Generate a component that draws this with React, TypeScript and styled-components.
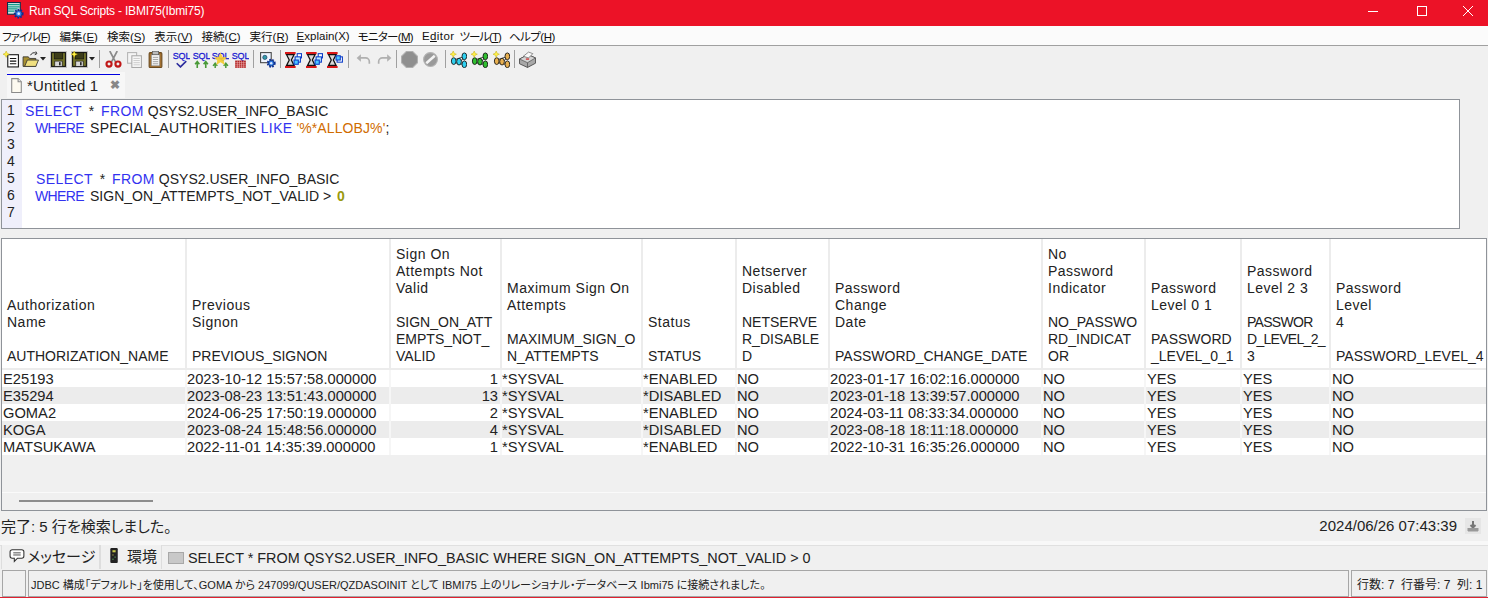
import React from 'react';
import styled, { createGlobalStyle } from 'styled-components';

const FONT = `"Liberation Sans", "Noto Sans CJK JP", sans-serif`;

const Global = createGlobalStyle`
  html, body { margin: 0; padding: 0; background: #f0f0f0; }
  body { font-family: ${FONT}; color: #111; overflow: hidden; font-feature-settings: "palt"; }
  #root { height: 598px; width: 1488px; }
`;

const Page = styled.div`
  width: 1488px; height: 598px; display: flex; flex-direction: column; background: #f0f0f0; overflow: hidden;
`;
const TitleBar = styled.div`
  height: 26px; box-sizing: border-box; background: #ec1227; color: #fff; display: flex; align-items: center; padding: 0 0 5px 7px; font-size: 12px; letter-spacing: -.2px; flex: none;
`;
const TitleText = styled.span` margin-left: 5px; flex: 1; padding-top: 1px; `;
const WinBtn = styled.div<{ $w: number }>`
  width: ${p => p.$w}px; display: flex; align-items: center; justify-content: center;
`;
const MenuBar = styled.div`
  height: 20px; box-sizing: border-box; background: #fbfbfb; display: flex; align-items: center; padding-left: 2px; gap: 9px; font-size: 11.5px; flex: none; border-bottom: 1px solid #a0a0a0;
`;
const MenuItem = styled.span<{ $ls: number; $mr: number }>`
  white-space: nowrap; letter-spacing: ${p => p.$ls}px; margin-right: ${p => p.$mr}px;
  u { text-underline-offset: 1px; }
`;
const ToolBar = styled.div`
  height: 26px; display: flex; align-items: center; padding-left: 2px; flex: none;
`;
const Sep = styled.div` width: 1px; height: 18px; background: #a0a0a0; margin: 0 3px; flex: none; `;
const TabStrip = styled.div`
  height: 27px; background: #f0f0f0; display: flex; align-items: flex-start; padding-left: 7px; flex: none;
`;
const DocTab = styled.div`
  position: relative; width: 118px; height: 26px; box-sizing: border-box; background: #f7f7f7; display: flex; align-items: center; gap: 2px; padding: 0 0 0 1px; font-size: 15px; letter-spacing: .2px; color: #222;
  &::before { content: ''; position: absolute; left: 0; top: 2px; width: 113px; height: 1px; background: #0000e0; }
`;
const DocClose = styled.span` margin-left: 10px; color: #888; font-size: 12px; font-weight: bold; line-height: 1; `;
const Gap = styled.div<{ $h: number }>` height: ${p => p.$h}px; flex: none; `;
const Editor = styled.div`
  margin: 0 28px 0 1px; height: 130px; box-sizing: border-box; flex: none; border: 1px solid #8f9399; background: #fff; display: flex; overflow: hidden;
`;
const Gutter = styled.div`
  width: 20px; background: #efeffb; padding: 2px 0 0 5px; box-sizing: border-box; font-size: 14px; line-height: 17px; color: #222; flex: none;
`;
const Code = styled.div`
  padding: 3px 0 0 3px; font-size: 14px; line-height: 17px; white-space: pre; color: #222;
`;
const CodeLine = styled.div<{ $indent?: number }>` height: 17px; padding-left: ${p => p.$indent ?? 0}px; `;
const Kw = styled.span` color: #3232f0; letter-spacing: .4px; `;
const Where = styled.span` color: #3232f0; letter-spacing: -.6px; margin-right: 2px; `;
const Star = styled.span` margin: 0 3px; `;
const Wide = styled.span` letter-spacing: .3px; `;
const Str = styled.span` color: #d06c00; letter-spacing: .1px; `;
const Num = styled.span` color: #9a9a10; font-weight: bold; margin-left: 2px; `;
const Results = styled.div`
  margin: 0 1px; height: 273px; box-sizing: border-box; flex: none; border: 1px solid #8f9399; background: #f0f0f0; display: flex; flex-direction: column; overflow: hidden;
`;
const COLS = '185px 204px 111px 141px 94px 93px 213px 103px 96px 89px 157px';
const Head = styled.div`
  display: grid; grid-template-columns: ${COLS}; height: 131px; box-sizing: border-box; background: #fff; flex: none; border-bottom: 2px solid #ececec;
`;
const HeadCell = styled.div`
  display: flex; flex-direction: column; justify-content: flex-end; padding: 0 0 3px 5px; font-size: 14px; line-height: 17px; border-right: 2px solid #ececec; white-space: pre; color: #222; box-sizing: border-box; overflow: hidden;
  &:last-child { border-right: 0; }
`;
const HeadTitle = styled.span` letter-spacing: .5px; `;
const HeadName = styled.span<{ $tight?: boolean }>` letter-spacing: ${p => (p.$tight ? '-.7px' : '0')}; `;
const Row = styled.div<{ $odd: boolean }>`
  display: grid; grid-template-columns: ${COLS}; height: 17px; background: ${p => (p.$odd ? '#ececec' : '#fff')}; flex: none;
`;
const Cell = styled.div<{ $right?: boolean; $flush?: boolean }>`
  font-size: 14.7px; line-height: 17px; height: 17px; padding: 1px 2px 0 ${p => (p.$flush ? 0 : 1)}px; white-space: nowrap; overflow: hidden; color: #222; box-sizing: border-box; border-right: 2px solid #f6f6f6;
  text-align: ${p => (p.$right ? 'right' : 'left')};
  &:last-child { border-right: 0; }
`;
const Spacer = styled.div` height: 38px; box-sizing: border-box; flex: none; border-bottom: 1px solid #fafafa; `;
const ScrollThumb = styled.div` width: 134px; height: 2px; background: #8c8c8c; margin: 7px 0 0 17px; flex: none; `;
const Status = styled.div`
  height: 30px; display: flex; align-items: center; font-size: 15px; flex: none; padding: 0 7px 0 1px; box-sizing: border-box; background: #f0f0f0;
`;
const StatusMsg = styled.span` flex: 1; color: #222; padding-bottom: 2px; `;
const StatusTime = styled.span` font-size: 15px; color: #222; margin-right: 8px; padding-bottom: 1px; `;
const DownloadBtn = styled.div` width: 16px; height: 16px; display: flex; align-items: center; justify-content: center; background: #e6e6e6; `;
const BottomTabs = styled.div`
  height: 29px; background: #f0f0f0; display: flex; flex: none; border-top: 4px solid #f8f8f8; box-sizing: border-box; box-shadow: inset 0 1px #e0e0e0; align-items: flex-start; padding-left: 1px;
`;
const MsgTab = styled.div<{ $w: number; $pad: number; $gap: number }>`
  width: ${p => p.$w}px; background: #f0f0f0; border-right: 1px solid #ddd; border-left: 1px solid #ddd; display: flex; align-items: center; font-size: 15px; gap: ${p => p.$gap}px; padding: 0 0 4px ${p => p.$pad}px; box-sizing: border-box; color: #222; height: 24px; white-space: nowrap;
`;
const QueryTab = styled.div`
  display: flex; align-items: center; gap: 4px; font-size: 14.4px; padding: 5px 0 0 6px; color: #222; white-space: nowrap;
`;
const QuerySwatch = styled.div` width: 16px; height: 12px; box-sizing: border-box; background: #c8c8c8; border: 1px solid #a8a8a8; `;
const Foot = styled.div`
  height: 28px; display: flex; gap: 2px; padding: 0 1px 0 2px; box-sizing: border-box; flex: none; border-bottom: 1px solid #e02030; background: #f0f0f0;
`;
const FootBox = styled.div<{ $w?: number; $grow?: boolean }>`
  ${p => (p.$w ? `width: ${p.$w}px;` : '')} ${p => (p.$grow ? 'flex: 1;' : 'flex: none;')}
  border: 1px solid #a6a6a6; box-sizing: border-box; display: flex; align-items: center; padding-left: 2px; font-size: 11px; color: #222; white-space: nowrap; overflow: hidden;
`;
const FootCount = styled.span` font-size: 12px; padding-left: 3px; `;
const IconBox = styled.svg` width: 17px; height: 17px; flex: none; display: block; `;
const Slot = styled.div<{ $w: number }>` width: ${p => p.$w}px; height: 24px; display: flex; align-items: center; justify-content: center; flex: none; `;
const CaretWrap = styled.div` width: 7px; display: flex; align-items: center; flex: none; `;

const Spark = ({ x = 3, y = 3 }: { x?: number; y?: number }) => (
  <path d={`M${x} ${y - 3}l.9 2.100 2.100.9-2.100.9-.9 2.100-.9-2.100-2.100-.9 2.100-.9z`} fill="#fff24a" stroke="#b8a000" strokeWidth=".4" />
);
const Ico = ({ children }: { children: React.ReactNode }) => <IconBox viewBox="0 0 16 16">{children}</IconBox>;
const Gear = ({ cx, cy, r }: { cx: number; cy: number; r: number }) => (
  <>
    <circle cx={cx} cy={cy} r={r} fill="none" stroke="#0d2c9a" strokeWidth="2" strokeDasharray="1.500 1.100" />
    <circle cx={cx} cy={cy} r={r - .5} fill="#2f78e8" stroke="#0d2c66" strokeWidth=".7" />
    <circle cx={cx} cy={cy} r={r * .35} fill="#d8ecff" />
  </>
);

const NewDoc = () => <Ico><rect x="4.500" y="3.500" width="10" height="11.500" fill="#fff" stroke="#111" /><path d="M6.500 7h6M6.500 9.500h6M6.500 12h6" stroke="#111" strokeWidth="1" /><Spark /></Ico>;
const Folder = () => <Ico><path d="M1 5.500h5l1 1.500h6v7.500H1z" fill="#a89030" stroke="#333" strokeWidth=".8" /><path d="M2.500 14.500l2.500-6h10.500l-2.500 6z" fill="#f0e080" stroke="#333" strokeWidth=".8" /><path d="M8 4c1-2 3-3 5-2M13 .5l1 2-2 1" fill="none" stroke="#222" strokeWidth=".9" /></Ico>;
const Floppy = ({ spark }: { spark?: boolean }) => (
  <Ico>
    <rect x="0" y="0" width="16" height="16" fill="#c4c4c4" />
    <rect x="1.500" y="1.500" width="13" height="13" fill="#76762a" stroke="#111" />
    <rect x="4" y="1.500" width="8" height="6" fill="#3c3c18" stroke="#111" strokeWidth=".6" />
    <rect x="4.500" y="9.500" width="7" height="5" fill="#d8d8d8" stroke="#111" strokeWidth=".6" />
    <rect x="8.500" y="10.500" width="1.500" height="3" fill="#222" />
    {spark && <Spark />}
  </Ico>
);
const Caret = () => <CaretWrap><svg width="6" height="4" viewBox="0 0 6 4"><path d="M0 0h6L3 3.500z" fill="#222" /></svg></CaretWrap>;
const Scissors = () => <Ico><path d="M4.500 0l5.500 10.500M11.500 0L6 10.500" stroke="#8a8a8a" strokeWidth="1.600" /><circle cx="3.800" cy="12.300" r="2.400" fill="none" stroke="#c01818" strokeWidth="2" /><circle cx="12.200" cy="12.300" r="2.400" fill="none" stroke="#c01818" strokeWidth="2" /></Ico>;
const CopyI = () => <Ico><rect x="1.500" y="1.500" width="8.500" height="10" fill="#f4f4f4" stroke="#b4b4b4" /><rect x="5.500" y="4.500" width="9" height="11" fill="#f8f8f8" stroke="#a8a8a8" /><path d="M7 7h6M7 9h6M7 11h6M7 13h6" stroke="#c4c4c4" strokeWidth=".8" /></Ico>;
const Paste = () => <Ico><rect x="2" y="1.500" width="12" height="14" rx="1" fill="#a5702c" stroke="#6a4a20" /><rect x="4" y="3.500" width="8" height="10.500" fill="#f2f2f2" stroke="#777" strokeWidth=".6" /><rect x="5" y=".5" width="6" height="3" fill="#bbb" stroke="#555" strokeWidth=".6" /><path d="M5.500 6h5M5.500 8h5M5.500 10h5M5.500 12h5" stroke="#999" strokeWidth=".8" /></Ico>;
const SqlIco = ({ kind }: { kind: 'check' | 'run' | 'star' | 'grid' }) => (
  <Ico>
    <text x="8" y="7.500" textAnchor="middle" fontSize="8.500" fontFamily="Liberation Sans" stroke="#1a1ad0" strokeWidth=".25" fill="#1a1ad0" letterSpacing="-.2">SQL</text>
    {kind === 'check' && <path d="M3.500 11.500l3.500 3.500 5.500-5.500" fill="none" stroke="#2c2c9c" strokeWidth="1.500" />}
    {kind === 'run' && <path d="M4 16v-5.500M2 12.500l2-2.500 2 2.500M12 16v-5.500M10 12.500l2-2.500 2 2.500" fill="none" stroke="#4a9a38" strokeWidth="1.500" />}
    {kind === 'star' && <><path d="M3 16v-4M1 14l2-2.500L5 14M13 16v-4M11 14l2-2.500 2 2.500" fill="none" stroke="#4a9a38" strokeWidth="1.400" /><path d="M8 1.500l1.900 4.100 4.300.4-3.200 2.900 1 4.300L8 10.500l-4 2.700 1-4.300L1.800 6l4.300-.4z" fill="#f4cc30" opacity=".92" /></>}
    {kind === 'grid' && <><rect x="3" y="9" width="10" height="7" fill="#b02020" /><path d="M3 11h10M3 13h10M3 15h10M5 9v7M7 9v7M9 9v7M11 9v7" stroke="#f4c0c0" strokeWidth=".5" /></>}
  </Ico>
);
const Gears = () => <Ico><rect x="1.500" y="1.500" width="10" height="9.500" fill="#eef4ff" stroke="#444" /><circle cx="5.500" cy="6" r="2" fill="#39a" stroke="#135" strokeWidth=".6" /><Gear cx={11.500} cy={11.500} r={3.200} /></Ico>;
const Hourglass = ({ n }: { n: number }) => (
  <Ico>
    <path d="M0 2h10M0 15h10" stroke="#d81818" strokeWidth="2" />
    <path d="M1.500 3.500h7L6 8.500l2.500 5h-7L4 8.500z" fill="#d8d8d8" stroke="#111" strokeWidth="1.200" />
    {n > 1 && <rect x="11.500" y="2.500" width="4" height="4" fill="#fff" stroke="#0a3cc8" />}
    <rect x="9.500" y="5.500" width="5" height="5" fill={n === 2 ? '#bfe9ff' : '#fff'} stroke="#0a3cc8" />
    {n >= 1 && <rect x="8.500" y={n === 2 ? 8.500 : 4.500} width="4" height="4" fill="#4cc8ff" stroke="#0a3cc8" />}
  </Ico>
);
const Undo = ({ flip }: { flip?: boolean }) => <Ico><g transform={flip ? 'translate(16 0) scale(-1 1)' : ''}><path d="M4 6.500h6a3.500 3.500 0 0 1 3.500 3.500v2" fill="none" stroke="#b0b0b0" strokeWidth="1.600" /><path d="M1.500 6.500l4-3.500v7z" fill="#b0b0b0" /></g></Ico>;
const StopOct = () => <Ico><path d="M5 .5h6l4.500 4.500v6L11 15.500H5L.5 11V5z" fill="#8f8f8f" stroke="#b0b0b0" /></Ico>;
const NoEntry = () => <Ico><circle cx="8" cy="8" r="6.500" fill="#9a9a9a" stroke="#b4b4b4" strokeWidth="1" /><path d="M4 11.500l8-7" stroke="#f4f4f4" strokeWidth="2.400" /></Ico>;
const Beans = ({ c }: { c: string }) => (
  <Ico>
    <path d="M5 8l9-3M5 11l9 2M10 10l4-5" stroke="#111" strokeWidth=".7" />
    <ellipse cx="3.500" cy="9.500" rx="2.200" ry="3.200" fill={c} stroke="#111" strokeWidth=".8" />
    <ellipse cx="8.500" cy="10" rx="2.200" ry="3.200" fill={c} stroke="#111" strokeWidth=".8" />
    <ellipse cx="13.500" cy="5" rx="2.200" ry="3.200" fill={c} stroke="#111" strokeWidth=".8" />
    <ellipse cx="13.500" cy="12.500" rx="2.200" ry="3.200" fill={c} stroke="#111" strokeWidth=".8" />
    <Spark x={3} y={3} />
  </Ico>
);
const Printer = () => <Ico><path d="M.5 7.500l8-4 7 3v5l-7.500 4-7.500-3.500z" fill="#a8a8a8" stroke="#444" strokeWidth=".8" /><path d="M.5 7.500l7.500 3.500 7.500-4.500-7-3z" fill="#d4d4d4" stroke="#444" strokeWidth=".6" /><path d="M4 5l5-4 4 1.500L9 6.500z" fill="#f8f8f8" stroke="#555" strokeWidth=".6" /><path d="M8 11v4.500" stroke="#444" strokeWidth=".6" /><rect x="6.500" y="7" width="3" height="1.200" fill="#d03030" /></Ico>;
const AppIcon = () => (
  <svg width="17" height="17" viewBox="0 0 16 16">
    <rect x=".5" y=".5" width="12" height="11" fill="#d4eae6" stroke="#0c2e48" />
    <path d="M1 2.500h11M1 4.500h11M1 6.500h9M1 8.500h6" stroke="#159a8a" strokeWidth="1.200" />
    <Gear cx={11} cy={11} r={3.600} />
  </svg>
);
const DocIcon = () => <Ico><path d="M3.500 1.500h6l3 3v10h-9z" fill="#fdfaf0" stroke="#8a8a8a" /><path d="M9.500 1.500v3h3" fill="#e8e8e8" stroke="#8a8a8a" /></Ico>;
const Bubble = () => <Ico><path d="M3 2.500h9a2 2 0 0 1 2 2v4a2 2 0 0 1-2 2H8l-3 3v-3H3a2 2 0 0 1-2-2v-4a2 2 0 0 1 2-2z" fill="#fff" stroke="#333" /><path d="M4 5.500h7M4 7.500h7" stroke="#333" strokeWidth=".8" /></Ico>;
const Phone = () => <Ico><rect x="5" y="1" width="7" height="14" rx="1" fill="#222" /><rect x="7" y="3" width="3" height="2" fill="#c8c84a" /><rect x="7" y="7" width="1" height="1" fill="#c8c84a" /><rect x="9" y="9" width="1" height="1" fill="#68c868" /><rect x="7" y="11" width="1" height="1" fill="#68c868" /></Ico>;
const Download = () => <svg width="12" height="12" viewBox="0 0 12 12"><path d="M6 1v6M3.500 5L6 7.500 8.500 5" fill="none" stroke="#777" strokeWidth="2" /><path d="M1 8v3h10V8" fill="#999" stroke="#999" /></svg>;

const MENU: { a: string; b: string; c: string; ls?: number; mr?: number }[] = [
  { a: 'ファイル(', b: 'F', c: ')', ls: -1, mr: 1 },
  { a: '編集(', b: 'E', c: ')' },
  { a: '検索(', b: 'S', c: ')' },
  { a: '表示(', b: 'V', c: ')' },
  { a: '接続(', b: 'C', c: ')' },
  { a: '実行(', b: 'R', c: ')', mr: -1 },
  { a: '', b: 'E', c: 'xplain(X)', mr: -1 },
  { a: 'モニター(', b: 'M', c: ')', ls: -.7 },
  { a: 'E', b: 'd', c: 'itor', ls: .4, mr: -4 },
  { a: 'ツール(', b: 'T', c: ')', ls: -1, mr: -1 },
  { a: 'ヘルプ(', b: 'H', c: ')', ls: -.5 },
];

const HEADERS: { title: string; name: string; tight?: boolean }[] = [
  { title: 'Authorization\nName', name: 'AUTHORIZATION_NAME' },
  { title: 'Previous\nSignon', name: 'PREVIOUS_SIGNON' },
  { title: 'Sign On\nAttempts Not\nValid', name: 'SIGN_ON_ATT\nEMPTS_NOT_\nVALID' },
  { title: 'Maximum Sign On\nAttempts', name: 'MAXIMUM_SIGN_O\nN_ATTEMPTS' },
  { title: 'Status', name: 'STATUS' },
  { title: 'Netserver\nDisabled', name: 'NETSERVE\nR_DISABLE\nD' },
  { title: 'Password\nChange\nDate', name: 'PASSWORD_CHANGE_DATE' },
  { title: 'No\nPassword\nIndicator', name: 'NO_PASSWO\nRD_INDICAT\nOR' },
  { title: 'Password\nLevel 0 1', name: 'PASSWORD\n_LEVEL_0_1' },
  { title: 'Password\nLevel 2 3', name: 'PASSWOR\nD_LEVEL_2_\n3', tight: true },
  { title: 'Password\nLevel\n4', name: 'PASSWORD_LEVEL_4' },
];

const ROWS = [
  ['E25193', '2023-10-12 15:57:58.000000', '1', '*SYSVAL', '*ENABLED', 'NO', '2023-01-17 16:02:16.000000', 'NO', 'YES', 'YES', 'NO'],
  ['E35294', '2023-08-23 13:51:43.000000', '13', '*SYSVAL', '*DISABLED', 'NO', '2023-01-18 13:39:57.000000', 'NO', 'YES', 'YES', 'NO'],
  ['GOMA2', '2024-06-25 17:50:19.000000', '2', '*SYSVAL', '*ENABLED', 'NO', '2024-03-11 08:33:34.000000', 'NO', 'YES', 'YES', 'NO'],
  ['KOGA', '2023-08-24 15:48:56.000000', '4', '*SYSVAL', '*DISABLED', 'NO', '2023-08-18 18:11:18.000000', 'NO', 'YES', 'YES', 'NO'],
  ['MATSUKAWA', '2022-11-01 14:35:39.000000', '1', '*SYSVAL', '*ENABLED', 'NO', '2022-10-31 16:35:26.000000', 'NO', 'YES', 'YES', 'NO'],
];

export default function App() {
  return (
    <Page>
      <Global />
      <TitleBar>
        <AppIcon />
        <TitleText>Run SQL Scripts - IBMI75(Ibmi75)</TitleText>
        <WinBtn $w={46}><svg width="10" height="10" viewBox="0 0 10 10"><path d="M0 5.500h10" stroke="#fff" /></svg></WinBtn>
        <WinBtn $w={52}><svg width="10" height="10" viewBox="0 0 10 10"><rect x=".5" y=".5" width="9" height="9" fill="none" stroke="#fff" /></svg></WinBtn>
        <WinBtn $w={40}><svg width="10" height="10" viewBox="0 0 10 10"><path d="M0 0l10 10M10 0L0 10" stroke="#fff" /></svg></WinBtn>
      </TitleBar>
      <MenuBar>
        {MENU.map(m => <MenuItem key={m.a + m.b + m.c} $ls={m.ls ?? 0} $mr={m.mr ?? 0}>{m.a}<u>{m.b}</u>{m.c}</MenuItem>)}
      </MenuBar>
      <ToolBar>
        <Slot $w={18}><NewDoc /></Slot>
        <Slot $w={20}><Folder /></Slot><Caret />
        <Slot $w={22}><Floppy /></Slot>
        <Slot $w={20}><Floppy spark /></Slot><Caret />
        <Sep />
        <Slot $w={20}><Scissors /></Slot><Slot $w={22}><CopyI /></Slot><Slot $w={20}><Paste /></Slot>
        <Sep />
        <Slot $w={19}><SqlIco kind="check" /></Slot><Slot $w={20}><SqlIco kind="run" /></Slot><Slot $w={19}><SqlIco kind="star" /></Slot><Slot $w={20}><SqlIco kind="grid" /></Slot>
        <Sep />
        <Slot $w={20}><Gears /></Slot>
        <Sep />
        <Slot $w={18}><Hourglass n={2} /></Slot><Slot $w={24}><Hourglass n={2} /></Slot><Slot $w={19}><Hourglass n={1} /></Slot>
        <Sep />
        <Slot $w={23}><Undo /></Slot><Slot $w={18}><Undo flip /></Slot>
        <Sep />
        <Slot $w={19}><StopOct /></Slot><Slot $w={23}><NoEntry /></Slot>
        <Sep />
        <Slot $w={19}><Beans c="#30d0f0" /></Slot><Slot $w={23}><Beans c="#30c030" /></Slot><Slot $w={20}><Beans c="#e8b050" /></Slot>
        <Sep />
        <Slot $w={19}><Printer /></Slot>
      </ToolBar>
      <TabStrip>
        <DocTab><DocIcon />*Untitled 1<DocClose>✖</DocClose></DocTab>
      </TabStrip>
      <Editor>
        <Gutter>{[1, 2, 3, 4, 5, 6, 7].map(n => <div key={n}>{n}</div>)}</Gutter>
        <Code>
          <CodeLine><Kw>SELECT</Kw> <Star>*</Star> <Kw>FROM</Kw> QSYS2.USER_INFO_BASIC</CodeLine>
          <CodeLine $indent={10}><Where>WHERE</Where> <Wide>SPECIAL_AUTHORITIES</Wide> <Kw>LIKE</Kw> <Str>'%*ALLOBJ%'</Str>;</CodeLine>
          <CodeLine />
          <CodeLine />
          <CodeLine $indent={11}><Kw>SELECT</Kw> <Star>*</Star> <Kw>FROM</Kw> QSYS2.USER_INFO_BASIC</CodeLine>
          <CodeLine $indent={10}><Where>WHERE</Where> SIGN_ON_ATTEMPTS_NOT_VALID &gt; <Num>0</Num></CodeLine>
        </Code>
      </Editor>
      <Gap $h={9} />
      <Results>
        <Head>
          {HEADERS.map(h => (
            <HeadCell key={h.name}>
              <HeadTitle>{h.title}</HeadTitle>
              <br />
              <HeadName $tight={h.tight}>{h.name}</HeadName>
            </HeadCell>
          ))}
        </Head>
        {ROWS.map((r, i) => (
          <Row key={r[0]} $odd={i % 2 === 1}>
            {r.map((c, j) => <Cell key={j} $right={j === 2} $flush={j >= 1 && j <= 7}>{c}</Cell>)}
          </Row>
        ))}
        <Spacer />
        <ScrollThumb />
      </Results>
      <Status>
        <StatusMsg>完了: 5 行を検索しました。</StatusMsg>
        <StatusTime>2024/06/26 07:43:39</StatusTime>
        <DownloadBtn><Download /></DownloadBtn>
      </Status>
      <BottomTabs>
        <MsgTab $w={99} $pad={7} $gap={1}><Bubble />メッセージ</MsgTab>
        <MsgTab $w={62} $pad={4} $gap={5}><Phone />環境</MsgTab>
        <QueryTab><QuerySwatch />SELECT * FROM QSYS2.USER_INFO_BASIC WHERE SIGN_ON_ATTEMPTS_NOT_VALID &gt; 0</QueryTab>
      </BottomTabs>
      <Foot>
        <FootBox $w={24} />
        <FootBox $grow>JDBC 構成「デフォルト」を使用して、GOMA から 247099/QUSER/QZDASOINIT として IBMI75 上のリレーショナル・データベース Ibmi75 に接続されました。</FootBox>
        <FootBox $w={136}><FootCount>行数: 7&nbsp; 行番号: 7&nbsp; 列: 1</FootCount></FootBox>
      </Foot>
    </Page>
  );
}
